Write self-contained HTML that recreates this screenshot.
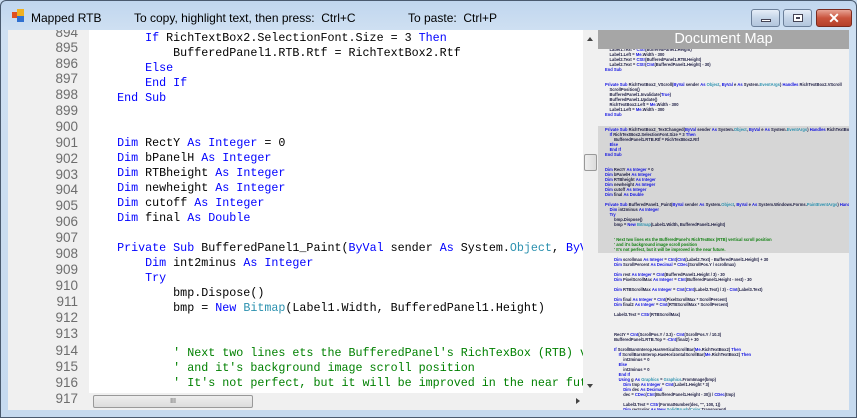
<!DOCTYPE html>
<html><head><meta charset="utf-8"><style>
*{margin:0;padding:0;box-sizing:border-box}
body{width:857px;height:418px;overflow:hidden;background:#c9dcf0;font-family:"Liberation Sans",sans-serif;position:relative}
.frame{position:absolute;left:0;top:0;width:857px;height:418px;border:1px solid #4a5a6e;border-radius:6px 6px 0 0;background:linear-gradient(#c0d6ee,#cfe0f2 30px,#c6daef)}
.title{position:absolute;top:11px;font-size:12px;color:#000;white-space:pre}
.btn{position:absolute;top:9px;height:18px;border:1px solid #6b7f99;border-radius:3px;background:linear-gradient(#e6eef8,#c5d5e8 50%,#b3c6dd)}
.close{background:linear-gradient(#e8a394,#c9533c 50%,#b4402a);border-color:#7a2a1e}
.gut{position:absolute;left:8px;top:30px;width:81px;height:380px;background:#f0f0f0;overflow:hidden}
.num{position:absolute;right:11px;font-size:13.5px;color:#6d6d6d;line-height:16px}
.code{position:absolute;left:89px;top:30px;width:494px;height:363px;background:#fff;overflow:hidden}
pre{position:absolute;left:0;top:1px;font-family:"Liberation Mono",monospace;font-size:11.7px;line-height:15px;color:#000}
.k{color:#0000ff}.t{color:#2b91af}.c{color:#008000}
.vs{position:absolute;left:583px;top:30px;width:15px;height:363px;background:#f0f0f0}
.hs{position:absolute;left:89px;top:393px;width:494px;height:17px;background:#f0f0f0}
.corner{position:absolute;left:583px;top:393px;width:15px;height:17px;background:#f0f0f0}
.map{position:absolute;left:598px;top:30px;width:251px;height:380px;background:#f0f0f0;overflow:hidden}
.hl{position:absolute;left:0;top:96px;width:251px;height:127px;background:#d6d6d6}
.mh{position:absolute;left:0;top:0;width:251px;height:19px;background:#a6a6a6;color:#fff;font-size:14.5px;text-align:center;line-height:19px;z-index:2}
.mt{position:absolute;left:7px;top:17px;font-size:4.1px;line-height:5px;white-space:pre;color:#1a1a40;font-weight:bold}
.mt b{color:#1010e0}.mt i{font-style:normal;color:#2b91af}.mt u{text-decoration:none;color:#108010}
</style></head><body>
<div class="frame"></div>
<div style="position:absolute;left:12px;top:12px;width:6px;height:6px;background:#e05020"></div>
<div style="position:absolute;left:17px;top:9px;width:7px;height:7px;background:#f0b020"></div>
<div style="position:absolute;left:17px;top:16px;width:7px;height:6px;background:#3070d0"></div>
<div class="title" style="left:31px">Mapped RTB</div>
<div class="title" style="left:134px">To copy, highlight text, then press:  Ctrl+C</div>
<div class="title" style="left:408px">To paste:  Ctrl+P</div>
<div class="btn" style="left:751px;width:29px"><div style="position:absolute;left:9px;top:9px;width:10px;height:3px;background:#fff;border:1px solid #445"></div></div>
<div class="btn" style="left:783px;width:29px"><div style="position:absolute;left:9px;top:4px;width:10px;height:8px;border:1px solid #445;background:#fff"><div style="margin:2px;width:4px;height:2px;background:#445"></div></div></div>
<div class="btn close" style="left:816px;width:36px;color:#fff;font-size:14px;font-weight:bold;text-align:center;line-height:16px">✕</div>

<div class="gut">
<div class="num" style="top:-5px">894</div><div class="num" style="top:10px">895</div><div class="num" style="top:26px">896</div><div class="num" style="top:41px">897</div><div class="num" style="top:57px">898</div><div class="num" style="top:73px">899</div><div class="num" style="top:89px">900</div><div class="num" style="top:105px">901</div><div class="num" style="top:121px">902</div><div class="num" style="top:137px">903</div><div class="num" style="top:152px">904</div><div class="num" style="top:168px">905</div><div class="num" style="top:184px">906</div><div class="num" style="top:200px">907</div><div class="num" style="top:216px">908</div><div class="num" style="top:232px">909</div><div class="num" style="top:248px">910</div><div class="num" style="top:264px">911</div><div class="num" style="top:280px">912</div><div class="num" style="top:296px">913</div><div class="num" style="top:313px">914</div><div class="num" style="top:329px">915</div><div class="num" style="top:345px">916</div><div class="num" style="top:361px">917</div>
</div>

<div class="code"><pre>        <span class="k">If</span> RichTextBox2.SelectionFont.Size = 3 <span class="k">Then</span>
            BufferedPanel1.RTB.Rtf = RichTextBox2.Rtf
        <span class="k">Else</span>
        <span class="k">End If</span>
    <span class="k">End Sub</span>


    <span class="k">Dim</span> RectY <span class="k">As Integer</span> = 0
    <span class="k">Dim</span> bPanelH <span class="k">As Integer</span>
    <span class="k">Dim</span> RTBheight <span class="k">As Integer</span>
    <span class="k">Dim</span> newheight <span class="k">As Integer</span>
    <span class="k">Dim</span> cutoff <span class="k">As Integer</span>
    <span class="k">Dim</span> final <span class="k">As Double</span>

    <span class="k">Private Sub</span> BufferedPanel1_Paint(<span class="k">ByVal</span> sender <span class="k">As</span> System.<span class="t">Object</span>, <span class="k">ByVal</span> e As
        <span class="k">Dim</span> int2minus <span class="k">As Integer</span>
        <span class="k">Try</span>
            bmp.Dispose()
            bmp = <span class="k">New</span> <span class="t">Bitmap</span>(Label1.Width, BufferedPanel1.Height)


            <span class="c">' Next two lines ets the BufferedPanel's RichTexBox (RTB) vertical</span>
            <span class="c">' and it's background image scroll position</span>
            <span class="c">' It's not perfect, but it will be improved in the near future.</span></pre></div>

<div class="vs">
<div style="position:absolute;left:4px;top:7px;border:3.5px solid transparent;border-bottom:4px solid #444;border-top:0"></div>
<div style="position:absolute;left:1px;top:124px;width:13px;height:17px;border:1px solid #999;border-radius:2px;background:linear-gradient(90deg,#eee,#dcdcdc)"></div>
<div style="position:absolute;left:4px;top:354px;border:3.5px solid transparent;border-top:4px solid #444;border-bottom:0"></div>
</div>
<div class="hs">
<div style="position:absolute;left:5px;top:5px;border:3.5px solid transparent;border-right:4px solid #444;border-left:0"></div>
<div style="position:absolute;left:4px;top:2px;width:160px;height:13px;border:1px solid #999;border-radius:2px;background:linear-gradient(#eee,#dcdcdc);font-size:7px;text-align:center;color:#555;line-height:11px">III</div>
<div style="position:absolute;left:487px;top:5px;border:3.5px solid transparent;border-left:4px solid #444;border-right:0"></div>
</div>
<div class="corner"></div>

<div class="map">
<div class="hl"></div>
<div class="mh">Document Map</div>
<div class="mt">    Label1.Text = <b>CStr</b>(BufferedPanel1.Height)
    Label1.Left = <b>Me</b>.Width - 300
    Label2.Text = <b>CStr</b>(BufferedPanel1.RTB.Height)
    Label2.Text = <b>CStr</b>(<b>CInt</b>(BufferedPanel1.Height) - 30)
<b>End Sub</b>


<b>Private Sub</b> RichTextBox2_VScroll(<b>ByVal</b> sender <b>As</b> <i>Object</i>, <b>ByVal</b> e <b>As</b> System.<i>EventArgs</i>) <b>Handles</b> RichTextBox2.VScroll
    ScrollPosition()
    BufferedPanel1.Invalidate(<b>True</b>)
    BufferedPanel1.Update()
    RichTextBox2.Left = <b>Me</b>.Width - 300
    Label1.Left = <b>Me</b>.Width - 300
<b>End Sub</b>


<b>Private Sub</b> RichTextBox2_TextChanged(<b>ByVal</b> sender <b>As</b> System.<i>Object</i>, <b>ByVal</b> e <b>As</b> System.<i>EventArgs</i>) <b>Handles</b> RichTextBox2.TextChanged
    <b>If</b> RichTextBox2.SelectionFont.Size = 3 <b>Then</b>
        BufferedPanel1.RTB.Rtf = RichTextBox2.Rtf
    <b>Else</b>
    <b>End If</b>
<b>End Sub</b>


<b>Dim</b> RectY <b>As Integer</b> = 0
<b>Dim</b> bPanelH <b>As Integer</b>
<b>Dim</b> RTBheight <b>As Integer</b>
<b>Dim</b> newheight <b>As Integer</b>
<b>Dim</b> cutoff <b>As Integer</b>
<b>Dim</b> final <b>As Double</b>

<b>Private Sub</b> BufferedPanel1_Paint(<b>ByVal</b> sender <b>As</b> System.<i>Object</i>, <b>ByVal</b> e <b>As</b> System.Windows.Forms.<i>PaintEventArgs</i>) <b>Handles</b> BufferedPanel1.Paint
    <b>Dim</b> int2minus <b>As Integer</b>
    <b>Try</b>
        bmp.Dispose()
        bmp = <b>New</b> <i>Bitmap</i>(Label1.Width, BufferedPanel1.Height)


        <u>' Next two lines ets the BufferedPanel's RichTexBox (RTB) vertical scroll position</u>
        <u>' and it's background image scroll position</u>
        <u>' It's not perfect, but it will be improved in the near future.</u>

        <b>Dim</b> scrollmax <b>As Integer</b> = <b>CInt</b>(<b>CInt</b>(Label2.Text) - BufferedPanel1.Height) + 30
        <b>Dim</b> ScrollPercent <b>As Decimal</b> = <b>CDec</b>(ScrollPos.Y / scrollmax)

        <b>Dim</b> rest <b>As Integer</b> = <b>CInt</b>(BufferedPanel1.Height / 3) - 30
        <b>Dim</b> PixelScrollMax <b>As Integer</b> = <b>CInt</b>(BufferedPanel1.Height - rest) - 30

        <b>Dim</b> RTBScrollMax <b>As Integer</b> = <b>CInt</b>(<b>CInt</b>(Label2.Text) / 3) - <b>CInt</b>(Label3.Text)

        <b>Dim</b> final <b>As Integer</b> = <b>CInt</b>(PixelScrollMax * ScrollPercent)
        <b>Dim</b> final2 <b>As Integer</b> = <b>CInt</b>(RTBScrollMax * ScrollPercent)

        Label3.Text = <b>CStr</b>(RTBScrollMax)



        RectY = <b>CInt</b>(ScrollPos.Y / 3.3) - <b>CInt</b>(ScrollPos.Y / 10.3)
        BufferedPanel1.RTB.Top = -<b>CInt</b>(final2) + 30

        <b>If</b> ScrollBarsInterop.HasVerticalScrollBar(<b>Me</b>.RichTextBox2) <b>Then</b>
            <b>If</b> ScrollBarsInterop.HasHorizontalScrollBar(<b>Me</b>.RichTextBox2) <b>Then</b>
                int2minus = 0
            <b>Else</b>
                int2minus = 0
            <b>End If</b>
            <b>Using</b> g <b>As</b> <i>Graphics</i> = <i>Graphics</i>.FromImage(bmp)
                <b>Dim</b> tmp <b>As Integer</b> = <b>CInt</b>(Label1.Height * 3)
                <b>Dim</b> dec <b>As Decimal</b>
                dec = <b>CDec</b>(<b>CInt</b>(BufferedPanel1.Height - 30)) / <b>CDec</b>(tmp)

                Label3.Text = <b>CStr</b>(FormatNumber(dec, "", 100, 1))
                <b>Dim</b> rectcolor <b>As New</b> <i>SolidBrush</i>(<i>Color</i>.Transparent)</div>
</div>
</body></html>
